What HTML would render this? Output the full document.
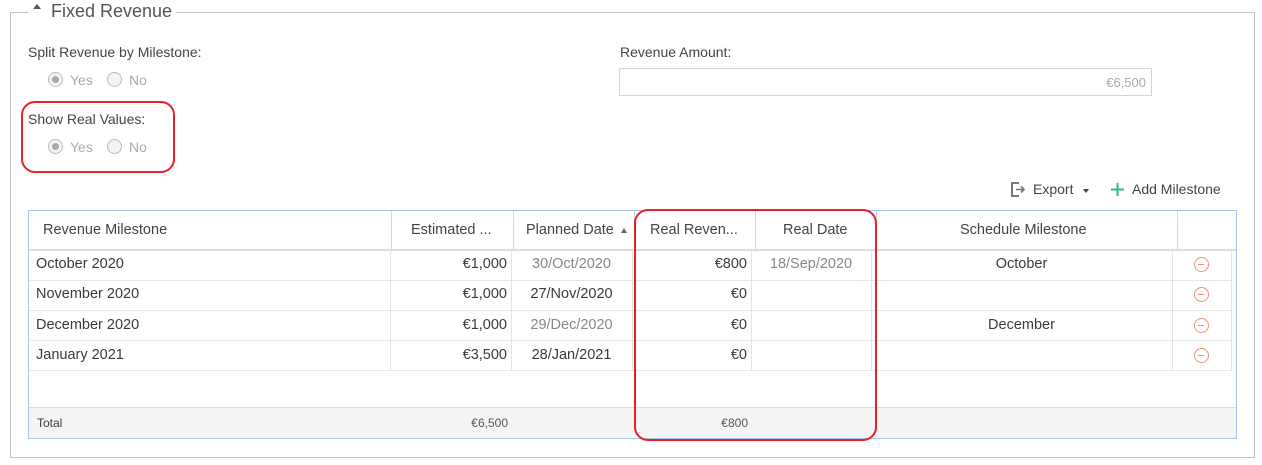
<!DOCTYPE html>
<html><head><meta charset="utf-8"><style>
*{margin:0;padding:0;box-sizing:border-box}
body{width:1262px;height:465px;background:#fff;font-family:"Liberation Sans",sans-serif;color:#3a3a3a;position:relative;overflow:hidden;font-size:14px}
.a{position:absolute;white-space:nowrap}
.g{color:#aaa}
.radio{position:absolute;width:15px;height:15px;border:1px solid #bbb;border-radius:50%;background:#f4f4f4}
.radio.on::after{content:"";position:absolute;left:3px;top:3px;width:7px;height:7px;border-radius:50%;background:#aaa}
.vl{position:absolute;width:1px;background:#e4e4e4}
.hl{position:absolute;height:1px;background:#e6e6e6}
.r{text-align:right}
.c{text-align:center}
.t{font-size:14.5px}
.minus{position:absolute;width:15px;height:15px;border:1.5px solid #f0907a;border-radius:50%}
.minus::after{content:"";position:absolute;left:3px;top:5.5px;width:6px;height:1.5px;background:#f0907a}
</style></head><body>
<div class="a" style="left:10px;top:12px;width:1245px;height:446px;border:1px solid #c0c0cc"></div>
<div class="a" style="left:28px;top:2px;width:148px;height:20px;background:#fff"></div>
<div class="a" style="left:33px;top:4px;width:0;height:0;border-left:4px solid transparent;border-right:4px solid transparent;border-bottom:5px solid #555"></div>
<div class="a" style="left:51px;top:1px;font-size:18px;color:#555">Fixed Revenue</div>

<div class="a" style="left:28px;top:44px;color:#444">Split Revenue by Milestone:</div>
<div class="radio on" style="left:48px;top:72px"></div><div class="a g" style="left:70px;top:72px">Yes</div>
<div class="radio" style="left:107px;top:72px"></div><div class="a g" style="left:129px;top:72px">No</div>

<div class="a" style="left:28px;top:111px;color:#444">Show Real Values:</div>
<div class="radio on" style="left:48px;top:139px"></div><div class="a g" style="left:70px;top:139px">Yes</div>
<div class="radio" style="left:107px;top:139px"></div><div class="a g" style="left:129px;top:139px">No</div>
<div class="a" style="left:21px;top:101px;width:154px;height:72px;border:2px solid #e8202a;border-radius:14px"></div>

<div class="a" style="left:620px;top:44px;color:#444">Revenue Amount:</div>
<div class="a r g" style="left:619px;top:68px;width:533px;height:28px;border:1px solid #d4d4dc;padding:6px 5px 0 0;font-size:13px">€6,500</div>

<svg class="a" style="left:1010px;top:181px" width="18" height="17" viewBox="0 0 18 17"><path d="M9 2H2v13h7" fill="none" stroke="#777" stroke-width="2"/><path d="M6 8.5h8M11 5.5l3 3-3 3" fill="none" stroke="#777" stroke-width="1.6"/></svg>
<div class="a" style="left:1033px;top:181px;color:#444">Export</div>
<div class="a" style="left:1083px;top:189px;border-left:3px solid transparent;border-right:3px solid transparent;border-top:4px solid #444"></div>
<svg class="a" style="left:1110px;top:182px" width="15" height="15" viewBox="0 0 15 15"><path d="M7.5 1v13M1 7.5h13" stroke="#2bbf7a" stroke-width="2"/></svg>
<div class="a" style="left:1132px;top:181px;color:#444">Add Milestone</div>

<div class="a" style="left:28px;top:210px;width:1209px;height:229px;border:1px solid #a8c4e8"></div>
<div class="hl" style="left:29px;top:249px;width:1207px;background:#ddd;height:2px"></div>
<div class="vl" style="left:391px;top:211px;height:38px;background:#d8d8d8"></div>
<div class="vl" style="left:513px;top:211px;height:38px;background:#d8d8d8"></div>
<div class="vl" style="left:634px;top:211px;height:38px;background:#d8d8d8"></div>
<div class="vl" style="left:755px;top:211px;height:38px;background:#d8d8d8"></div>
<div class="vl" style="left:876px;top:211px;height:38px;background:#d8d8d8"></div>
<div class="vl" style="left:1177px;top:211px;height:38px;background:#d8d8d8"></div>
<div class="a t" style="left:43px;top:222px;color:#444">Revenue Milestone</div>
<div class="a t" style="left:411px;top:222px;color:#444">Estimated ...</div>
<div class="a t" style="left:526px;top:222px;color:#444">Planned Date</div>
<div class="a" style="left:621px;top:228px;border-left:3.5px solid transparent;border-right:3.5px solid transparent;border-bottom:5px solid #666"></div>
<div class="a t" style="left:650px;top:222px;color:#444">Real Reven...</div>
<div class="a t" style="left:783px;top:222px;color:#444">Real Date</div>
<div class="a t" style="left:960px;top:222px;color:#444">Schedule Milestone</div>

<div class="vl" style="left:390px;top:251px;height:120px"></div>
<div class="vl" style="left:511px;top:251px;height:120px"></div>
<div class="vl" style="left:632px;top:251px;height:120px"></div>
<div class="vl" style="left:751px;top:251px;height:120px"></div>
<div class="vl" style="left:871px;top:251px;height:120px"></div>
<div class="vl" style="left:1172px;top:251px;height:120px"></div>
<div class="vl" style="left:1231px;top:251px;height:120px"></div>
<div class="hl" style="left:29px;top:280px;width:1202px"></div>
<div class="hl" style="left:29px;top:310px;width:1202px"></div>
<div class="hl" style="left:29px;top:340px;width:1202px"></div>
<div class="hl" style="left:29px;top:370px;width:1202px"></div>

<div class="a t" style="left:36px;top:256px">October 2020</div>
<div class="a t" style="left:36px;top:286px">November 2020</div>
<div class="a t" style="left:36px;top:317px">December 2020</div>
<div class="a t" style="left:36px;top:347px">January 2021</div>
<div class="a r t" style="left:400px;top:256px;width:107px">€1,000</div>
<div class="a r t" style="left:400px;top:286px;width:107px">€1,000</div>
<div class="a r t" style="left:400px;top:317px;width:107px">€1,000</div>
<div class="a r t" style="left:400px;top:347px;width:107px">€3,500</div>
<div class="a c t" style="left:511px;top:256px;width:121px;color:#888">30/Oct/2020</div>
<div class="a c t" style="left:511px;top:286px;width:121px">27/Nov/2020</div>
<div class="a c t" style="left:511px;top:317px;width:121px;color:#888">29/Dec/2020</div>
<div class="a c t" style="left:511px;top:347px;width:121px">28/Jan/2021</div>
<div class="a r t" style="left:640px;top:256px;width:107px">€800</div>
<div class="a r t" style="left:640px;top:286px;width:107px">€0</div>
<div class="a r t" style="left:640px;top:317px;width:107px">€0</div>
<div class="a r t" style="left:640px;top:347px;width:107px">€0</div>
<div class="a c t" style="left:751px;top:256px;width:120px;color:#888">18/Sep/2020</div>
<div class="a c t" style="left:871px;top:256px;width:301px">October</div>
<div class="a c t" style="left:871px;top:317px;width:301px">December</div>
<div class="minus" style="left:1194px;top:257px"></div>
<div class="minus" style="left:1194px;top:287px"></div>
<div class="minus" style="left:1194px;top:318px"></div>
<div class="minus" style="left:1194px;top:348px"></div>

<div class="a" style="left:29px;top:407px;width:1207px;height:31px;background:#f5f5f5;border-top:1px solid #ddd"></div>
<div class="a" style="left:37px;top:416px;font-size:12px">Total</div>
<div class="a r" style="left:400px;top:416px;width:108px;font-size:12px;color:#555">€6,500</div>
<div class="a r" style="left:640px;top:416px;width:108px;font-size:12px;color:#555">€800</div>

<div class="a" style="left:634px;top:209px;width:243px;height:232px;border:2px solid #e8202a;border-radius:14px"></div>
</body></html>
